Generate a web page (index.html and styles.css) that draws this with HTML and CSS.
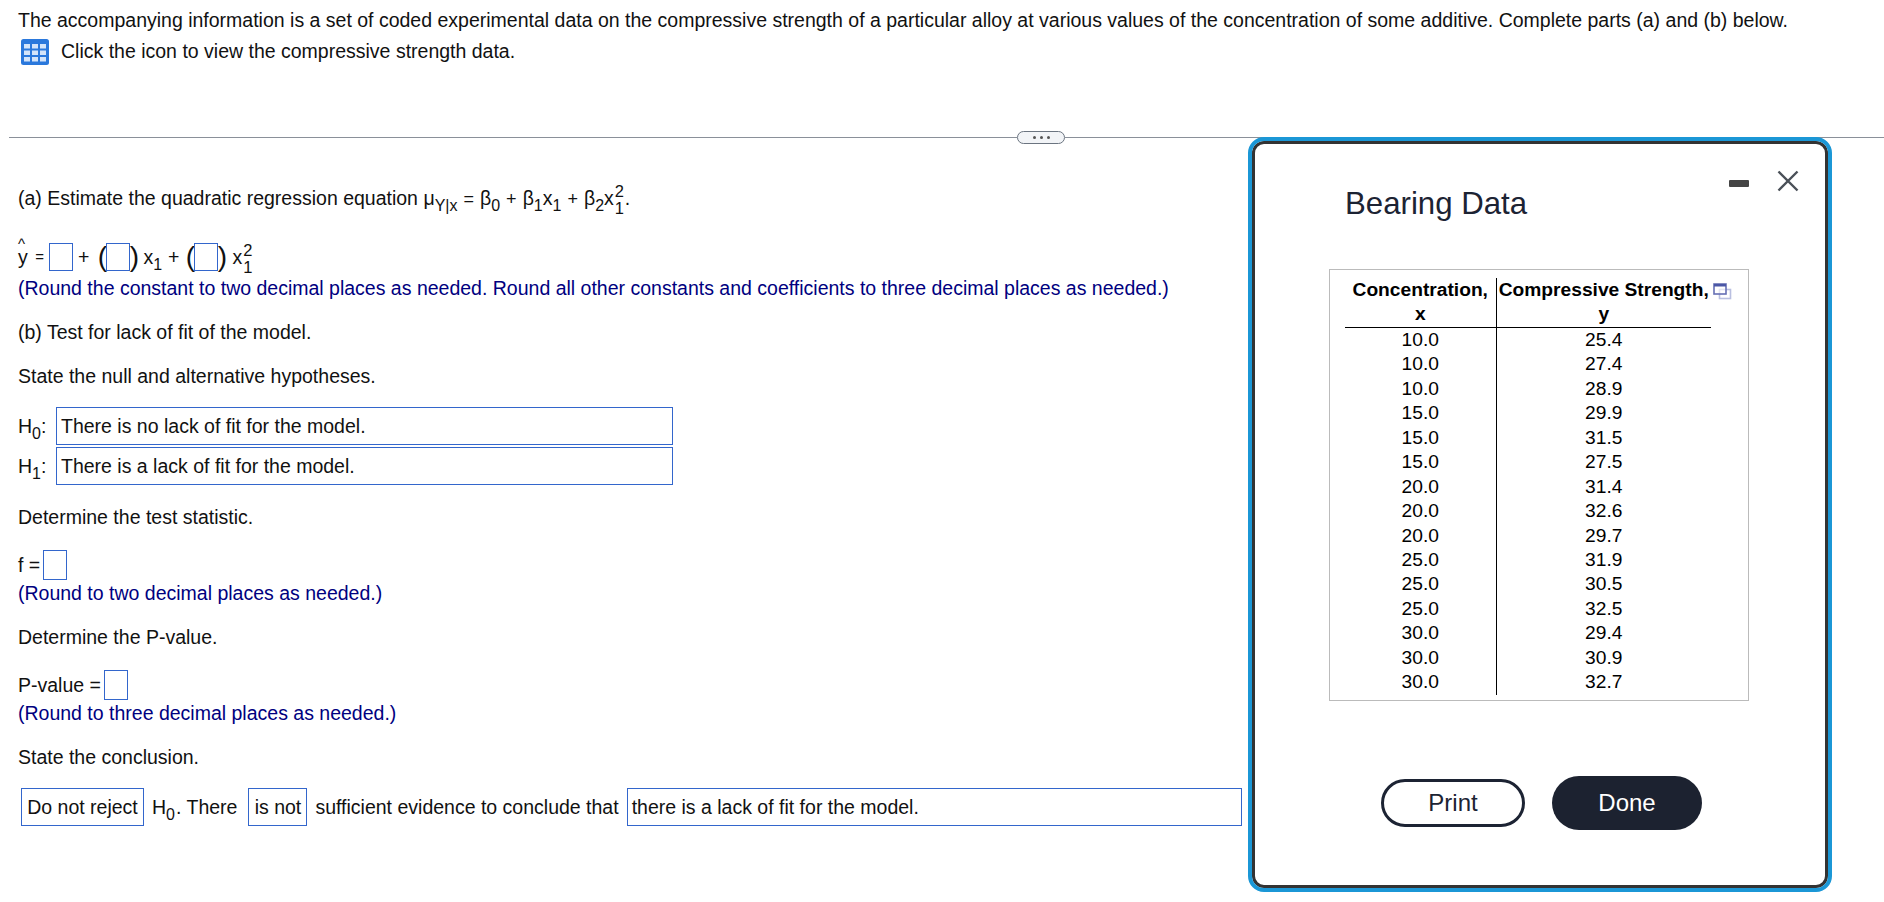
FILE: index.html
```html
<!DOCTYPE html>
<html lang="en">
<head>
    <meta charset="UTF-8">
    <title>Bearing Data</title>
    <link rel="stylesheet" href="styles.css">
</head>
<body>

<div class="prompt">
    <p class="prompt-line">The accompanying information is a set of coded experimental data on the compressive strength of a particular alloy at various values of the concentration of some additive. Complete parts (a) and (b) below.</p>
    <p class="prompt-link">
        <svg class="grid-icon" width="28" height="26" viewBox="0 0 28 26">
            <rect width="28" height="26" rx="2.5" fill="#2a78dc"/>
            <g fill="#d3e4fa">
                <rect x="3" y="5" width="6" height="4.5"/><rect x="11" y="5" width="6" height="4.5"/><rect x="19" y="5" width="6" height="4.5"/>
                <rect x="3" y="11.5" width="6" height="4.5"/><rect x="11" y="11.5" width="6" height="4.5"/><rect x="19" y="11.5" width="6" height="4.5"/>
                <rect x="3" y="18" width="6" height="4.5"/><rect x="11" y="18" width="6" height="4.5"/><rect x="19" y="18" width="6" height="4.5"/>
            </g>
        </svg>
        Click the icon to view the compressive strength data.
    </p>
</div>

<div class="divider">
    <span class="divider-line short"></span>
    <span class="more-pill"><i></i><i></i><i></i></span>
    <span class="divider-line"></span>
</div>

<main class="answers">
    <p class="text first">(a) Estimate the quadratic regression equation <span class="math">&mu;<sub>Y|x</sub><span class="op">=</span>&beta;<sub>0</sub><span class="op">+</span>&beta;<sub>1</sub>x<sub>1</sub><span class="op">+</span>&beta;<sub>2</sub>x<span class="stack"><span class="up">2</span><span class="down">1</span></span>.</span></p>

    <div class="eq-row">
        <span class="hat">y</span><span class="sign">=</span><span class="blank"></span>
        <span class="plus">+</span>
        <span class="paren">(</span><span class="blank"></span><span class="paren">)</span>
        <span class="var">x<sub>1</sub></span>
        <span class="plus second">+</span>
        <span class="paren">(</span><span class="blank"></span><span class="paren">)</span>
        <span class="var last-var">x<span class="stack"><span class="up">2</span><span class="down">1</span></span></span>
    </div>
    <p class="note">(Round the constant to two decimal places as needed. Round all other constants and coefficients to three decimal places as needed.)</p>

    <p class="text">(b) Test for lack of fit of the model.</p>
    <p class="text">State the null and alternative hypotheses.</p>

    <div class="hyp-row first-hyp"><span class="hyp-label">H<sub>0</sub>:</span><span class="filled wide">There is no lack of fit for the model.</span></div>
    <div class="hyp-row"><span class="hyp-label">H<sub>1</sub>:</span><span class="filled wide">There is a lack of fit for the model.</span></div>

    <p class="text">Determine the test statistic.</p>
    <div class="input-row"><span>f =</span><span class="blank tall"></span></div>
    <p class="note">(Round to two decimal places as needed.)</p>

    <p class="text">Determine the P-value.</p>
    <div class="input-row"><span>P-value =</span><span class="blank tall"></span></div>
    <p class="note tight">(Round to three decimal places as needed.)</p>

    <p class="text">State the conclusion.</p>
    <div class="conclusion">
        <span class="filled pick pick-reject">Do not reject</span>
        <span class="there">H<sub>0</sub>. There</span>
        <span class="filled pick pick-isnot">is not</span>
        <span>sufficient evidence to conclude that</span>
        <span class="filled last">there is a lack of fit for the model.</span>
    </div>
</main>

<section class="modal">
    <div class="window-btns">
        <span class="minimize"></span>
        <svg width="22" height="22" viewBox="0 0 22 22"><path d="M1.5 1.5 L20.5 20.5 M20.5 1.5 L1.5 20.5" stroke="#4a5058" stroke-width="2.4" fill="none"/></svg>
    </div>
    <h2 class="modal-title">Bearing Data</h2>

    <div class="data-box">
        <table class="data-table">
            <thead>
                <tr><th>Concentration,<br>x</th><th>Compressive Strength,<br>y</th></tr>
            </thead>
            <tbody>
                <tr><td>10.0</td><td>25.4</td></tr>
                <tr><td>10.0</td><td>27.4</td></tr>
                <tr><td>10.0</td><td>28.9</td></tr>
                <tr><td>15.0</td><td>29.9</td></tr>
                <tr><td>15.0</td><td>31.5</td></tr>
                <tr><td>15.0</td><td>27.5</td></tr>
                <tr><td>20.0</td><td>31.4</td></tr>
                <tr><td>20.0</td><td>32.6</td></tr>
                <tr><td>20.0</td><td>29.7</td></tr>
                <tr><td>25.0</td><td>31.9</td></tr>
                <tr><td>25.0</td><td>30.5</td></tr>
                <tr><td>25.0</td><td>32.5</td></tr>
                <tr><td>30.0</td><td>29.4</td></tr>
                <tr><td>30.0</td><td>30.9</td></tr>
                <tr><td>30.0</td><td>32.7</td></tr>
            </tbody>
        </table>
        <svg class="copy-icon" width="19" height="17" viewBox="0 0 19 17">
            <rect x="6.5" y="6.5" width="11" height="9" fill="#fff" stroke="#b9bfe0" stroke-width="1.6"/>
            <rect x="1" y="1" width="12" height="10" fill="#fff" fill-opacity="0.6" stroke="#6670b4" stroke-width="1.6"/>
            <rect x="1" y="1" width="12" height="2.5" fill="#4b57a6"/>
        </svg>
    </div>

    <div class="modal-actions">
        <button class="btn btn-print">Print</button>
        <button class="btn btn-done">Done</button>
    </div>
</section>

</body>
</html>
```

FILE: styles.css
```css
/* page */
html, body {
    margin: 0;
    padding: 0;
    background-color: #fff;
    color: #111;
    font-family: "Liberation Sans", Arial, sans-serif;
    font-size: 19.5px;
    line-height: 24px;
}
* { box-sizing: border-box; }
p { margin: 0; }
sub {
    font-size: 16px;
    line-height: 0;
    vertical-align: -6px;
}

/* top prompt */
.prompt {
    height: 130px;
    padding: 8px 0 0 18px;
}
.prompt-line { white-space: nowrap; }
.prompt-link {
    display: flex;
    align-items: center;
    gap: 12px;
    margin-left: 3px;
    margin-top: 4px;
}
.grid-icon { flex: none; margin-top: 3px; }

.divider {
    display: flex;
    align-items: center;
    height: 15px;
    margin-left: 9px;
}
.divider-line {
    flex: 1;
    height: 1px;
    background-color: #8a9099;
}
.divider-line.short {
    flex: none;
    width: 1008px;
}
.more-pill {
    display: flex;
    align-items: center;
    justify-content: center;
    gap: 4px;
    width: 48px;
    height: 13px;
    background-color: #f2f4f7;
    border: 1px solid #6b7480;
    border-radius: 7px;
}
.more-pill i {
    width: 3px;
    height: 3px;
    border-radius: 50%;
    background-color: #555;
}

/* left column */
.answers { padding-left: 18px; }
.text { height: 24px; margin-top: 20px; white-space: nowrap; }
.text.first { margin-top: 41px; }
.note { color: #00007f; margin-top: 5px; }
.input-row + .note { margin-top: 1px; }
.note.tight { margin-top: 1px; }

.op { margin: 0 6px; font-size: 18px; }
.stack {
    position: relative;
    display: inline-block;
    width: 11px;
    height: 1px;
    font-size: 16.5px;
    line-height: 16px;
}
.stack span { position: absolute; left: 1px; }
.stack .up { bottom: 6px; }
.stack .down { bottom: -11px; }

.eq-row {
    display: flex;
    align-items: center;
    height: 28px;
    margin-top: 33px;
}
.hat { position: relative; }
.hat::before {
    content: "^";
    position: absolute;
    left: 0;
    top: -13px;
    font-size: 15px;
}
.sign { margin: 0 5px 0 7.5px; font-size: 15px; }
.plus { margin: 0 9px 0 5px; }
.plus.second { margin: 0 7px 0 6px; }
.paren {
    display: flex;
    justify-content: center;
    width: 8px;
    font-size: 28px;
    line-height: 28px;
    font-weight: 400;
}
.var { margin-left: 5px; height: 24px; }
.last-var { margin-left: 6px; }
.blank {
    display: inline-block;
    width: 24px;
    height: 28px;
    background-color: #fff;
    border: 1px solid #3366cc;
}
.blank.tall { height: 30px; margin-left: 3px; }

.hyp-row {
    display: flex;
    align-items: center;
    height: 38px;
    margin-top: 2px;
}
.first-hyp { margin-top: 19px; }
.hyp-label { width: 38px; }
.filled {
    display: flex;
    align-items: center;
    height: 38px;
    padding: 0 4px;
    border: 1.5px solid #3366cc;
}
.filled.wide { width: 617px; }

.input-row {
    display: flex;
    align-items: center;
    margin-top: 21px;
}

.conclusion {
    display: flex;
    align-items: center;
    gap: 8px;
    margin: 19px 0 0 3px;
}
.there { margin-right: 3px; }
.there sub { margin-right: 1px; }
.filled.pick { justify-content: center; padding: 0; border-width: 1px; }
.pick-reject { width: 123px; }
.pick-isnot { width: 59px; }
.filled.last { width: 615px; }

/* data window */
.modal {
    position: absolute;
    left: 1248px;
    top: 137px;
    width: 584px;
    height: 755px;
    padding: 0 0 0 93px;
    background-color: #fff;
    border: 4px solid #1b97d6;
    border-radius: 16px;
    box-shadow: inset 0 0 0 3px #333;
}
.window-btns {
    position: absolute;
    top: 29px;
    right: 29px;
    display: flex;
    align-items: center;
    gap: 28px;
}
.minimize {
    width: 20px;
    height: 7px;
    margin-top: 4px;
    border-radius: 1px;
    background-color: #444;
}
.modal-title {
    margin: 0;
    padding-top: 45px;
    font-size: 31.2px;
    font-weight: 400;
    line-height: 36px;
    color: #1c2333;
}
.data-box {
    position: relative;
    width: 420px;
    height: 432px;
    margin: 47px 0 0 -16px;
    padding: 8px 0 0 15px;
    border: 1px solid #bbb;
}
.data-table {
    width: 366px;
    border-collapse: collapse;
    table-layout: fixed;
    font-size: 19.2px;
    line-height: 24.45px;
    color: #000;
    text-align: center;
}
.data-table th { padding: 0; }
.data-table td { padding: 0; }
.data-table th:first-child { width: 151px; }
.data-table th:first-child,
.data-table td:first-child { border-right: 1px solid #000; }
.data-table thead tr { border-bottom: 1.5px solid #000; }
.copy-icon {
    position: absolute;
    left: 383px;
    top: 13px;
}
.modal-actions {
    display: flex;
    align-items: center;
    gap: 27px;
    margin: 75px 0 0 36px;
}
.btn {
    font-family: inherit;
    font-size: 24px;
    border-radius: 27px;
    cursor: pointer;
}
.btn-print {
    width: 144px;
    height: 48px;
    background-color: #fff;
    color: #1c2333;
    border: 3px solid #1c2333;
}
.btn-done {
    width: 150px;
    height: 54px;
    background-color: #1c2230;
    color: #fff;
    border: none;
}
```
